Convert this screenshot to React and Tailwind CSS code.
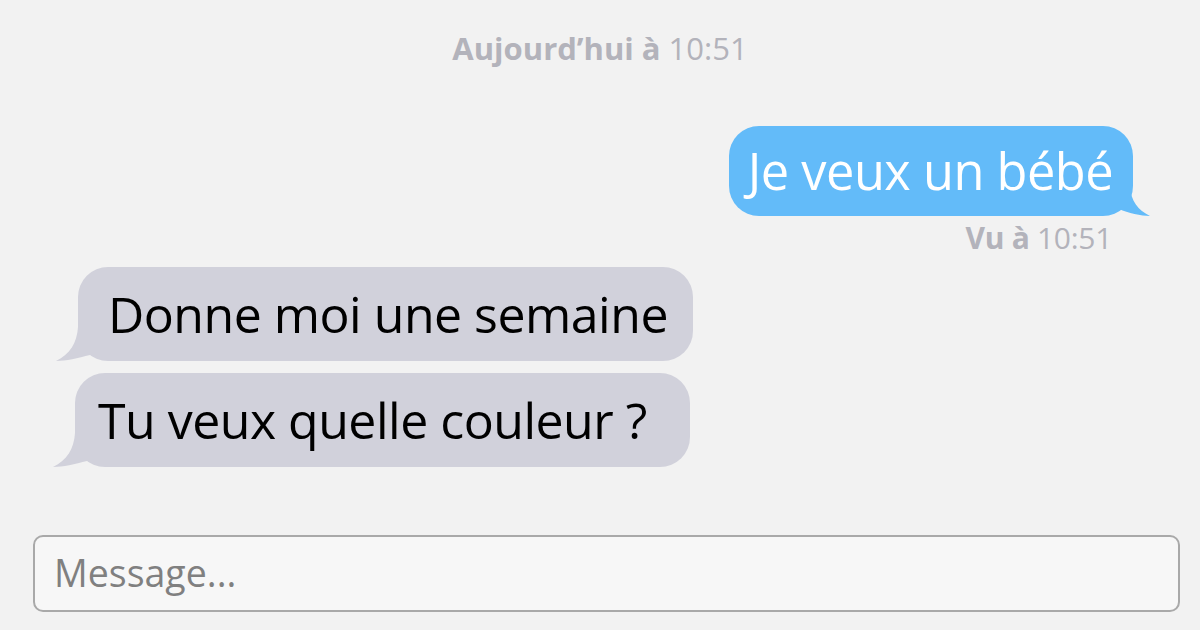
import React from "react";

const font = { fontFamily: '"Open Sans", "Liberation Sans", sans-serif' };

function BlueTail() {
  return (
    <svg className="absolute right-[-19px] bottom-0" width="44" height="40" viewBox="0 0 44 40">
      <path d="M22 0 L22 11 C23 25 30 34 42 40 C33 40 20 37 11 33 L11 0 Z" fill="#63bbf9" />
    </svg>
  );
}

function GrayTail() {
  return (
    <svg className="absolute left-[-26px] bottom-0" width="44" height="40" viewBox="0 0 44 40">
      <path d="M26 0 L26 6 C25 22 18 33 4 40 C14 40 26 37 38 34 L38 0 Z" fill="#d1d1db" />
    </svg>
  );
}

export default function App() {
  return (
    <div className="w-[1200px] h-[630px] bg-[#f2f2f2] flex flex-col overflow-hidden" style={font}>
      <div className="pt-[28px] text-center text-[31px] leading-[40px] text-[#b3b3bb]">
        <span className="font-bold">Aujourd’hui à</span> 10:51
      </div>

      <div className="mt-[58px] flex flex-col items-end pr-[67px]">
        <div className="relative">
          <div className="h-[90px] rounded-[30px] bg-[#63bbf9] pl-[19px] pr-[20px] flex items-center text-white text-[50.5px] tracking-[-0.5px]">
            Je veux un bébé
          </div>
          <BlueTail />
        </div>
        <div className="mt-[6px] pr-[21px] text-[30px] leading-[32px] tracking-[-0.3px] text-[#b3b3bb]">
          <span className="font-bold">Vu à</span> 10:51
        </div>
      </div>

      <div className="mt-[13px] flex flex-col items-start gap-[12px]">
        <div className="relative ml-[78px]">
          <div className="h-[94px] w-[615px] rounded-[30px] bg-[#d1d1db] pl-[30px] flex items-center text-black text-[50px] tracking-[-0.5px]">
            Donne moi une semaine
          </div>
          <GrayTail />
        </div>
        <div className="relative ml-[75px]">
          <div className="h-[94px] w-[615px] rounded-[30px] bg-[#d1d1db] pl-[23px] flex items-center text-black text-[50px] tracking-[-0.5px]">
            Tu veux quelle couleur ?
          </div>
          <GrayTail />
        </div>
      </div>

      <div className="mt-[68px] mx-[33px] mr-[20px] h-[77px] rounded-[10px] border-2 border-[#a9a9a9] bg-[#f7f7f7] flex items-center pl-[19px] text-[37.5px] text-[#808080]">
        Message...
      </div>
    </div>
  );
}
